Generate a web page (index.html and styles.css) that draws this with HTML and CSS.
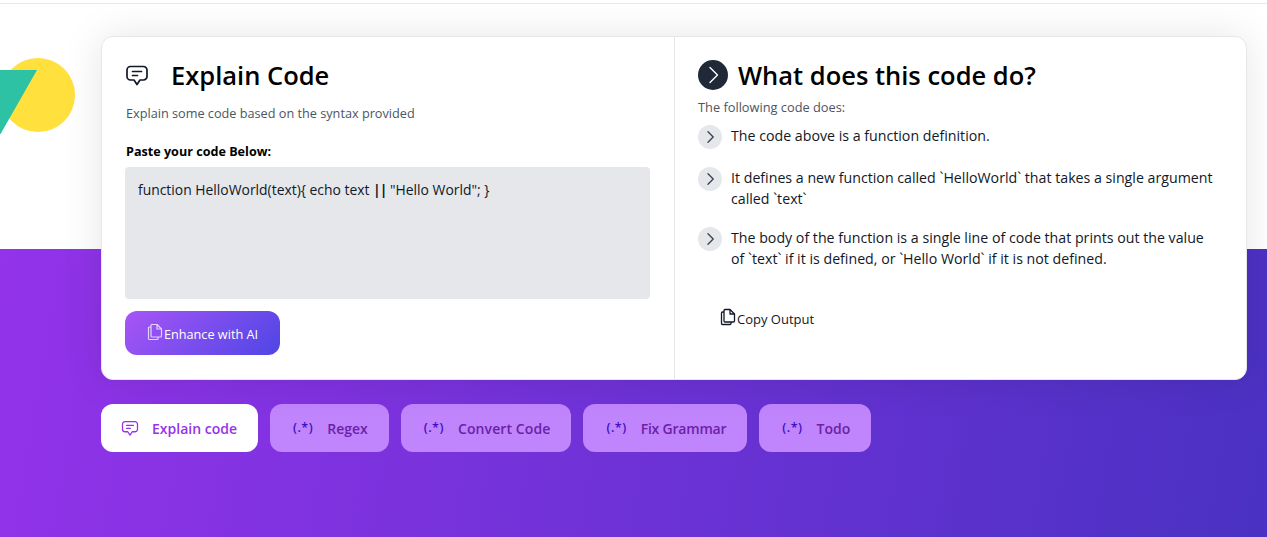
FILE: index.html
```html
<!DOCTYPE html>
<html lang="en">
<head>
<meta charset="utf-8">
<title>Explain Code</title>
<link rel="stylesheet" href="styles.css">
</head>
<body>
<div class="topbar"></div>
<main class="stage">
  <svg class="decor" width="76" height="76" viewBox="0 0 76 76" aria-hidden="true">
    <circle cx="38" cy="37" r="37" fill="#ffe03d"/>
    <polygon points="37,12 -4,12 -4,84" fill="#2dc2a4"/>
  </svg>
  <section class="card">
    <div class="pane pane-left">
      <div class="title-row">
        <svg class="title-icon" width="24" height="24" viewBox="0 0 24 24" fill="none" stroke="#111827" stroke-width="1.7" stroke-linecap="round" stroke-linejoin="round" aria-hidden="true"><path d="M5.500 3.500h13a3.500 3.500 0 0 1 3.500 3.500v6.500a3.500 3.500 0 0 1-3.500 3.500h-3.500L12 21.500 9 17H5.500A3.500 3.500 0 0 1 2 13.500V7a3.500 3.500 0 0 1 3.500-3.500z"/><path d="M7.500 8.500h9M7.500 12.500h5"/></svg>
        <h1 class="title">Explain Code</h1>
      </div>
      <p class="subtitle">Explain some code based on the syntax provided</p>
      <label class="field-label" for="code">Paste your code Below:</label>
      <div class="code-box" id="code">function HelloWorld(text){ echo text <b class="or">||</b> "Hello World"; }</div>
      <button class="enhance" type="button">
        <svg width="16" height="18" viewBox="0 0 16 18" fill="none" stroke="currentColor" stroke-width="1.200" stroke-linejoin="round" aria-hidden="true" class="copy-ico enhance-ico"><path d="M5 1.500h5l4.500 4.500v7a1 1 0 0 1-1 1H5a1 1 0 0 1-1-1v-10.500a1 1 0 0 1 1-1z"/><path d="M10 1.500V6h4.500"/><path d="M4 4H2.500a1 1 0 0 0-1 1v10.500a1 1 0 0 0 1 1H10a1 1 0 0 0 1-1V14"/></svg><span class="btn-text">Enhance with AI</span>
      </button>
    </div>
    <div class="pane pane-right">
      <div class="answer-head">
        <span class="bullet-lg"><svg width="18" height="18" viewBox="0 0 18 18" fill="none" stroke="#fff" stroke-width="1.400" stroke-linecap="round" stroke-linejoin="round" aria-hidden="true"><path d="M6 1.500 13.500 9 6 16.500"/></svg></span>
        <h2 class="title">What does this code do?</h2>
      </div>
      <p class="lead">The following code does:</p>
      <ul class="steps">
        <li class="step"><span class="bullet"><svg width="12" height="12" viewBox="0 0 12 12" fill="none" stroke="#374151" stroke-width="1.300" stroke-linecap="round" stroke-linejoin="round" aria-hidden="true"><path d="M4 .8 9.200 6 4 11.200"/></svg></span><span>The code above is a function definition.</span></li>
        <li class="step"><span class="bullet"><svg width="12" height="12" viewBox="0 0 12 12" fill="none" stroke="#374151" stroke-width="1.300" stroke-linecap="round" stroke-linejoin="round" aria-hidden="true"><path d="M4 .8 9.200 6 4 11.200"/></svg></span><span>It defines a new function called `HelloWorld` that takes a single argument called `text`</span></li>
        <li class="step"><span class="bullet"><svg width="12" height="12" viewBox="0 0 12 12" fill="none" stroke="#374151" stroke-width="1.300" stroke-linecap="round" stroke-linejoin="round" aria-hidden="true"><path d="M4 .8 9.200 6 4 11.200"/></svg></span><span>The body of the function is a single line of code that prints out the value of `text` if it is defined, or `Hello World` if it is not defined.</span></li>
      </ul>
      <button class="copy" type="button">
        <svg width="16" height="18" viewBox="0 0 16 18" fill="none" stroke="currentColor" stroke-width="1.300" stroke-linejoin="round" aria-hidden="true" class="copy-ico"><path d="M5 1.500h5l4.500 4.500v7a1 1 0 0 1-1 1H5a1 1 0 0 1-1-1v-10.500a1 1 0 0 1 1-1z"/><path d="M10 1.500V6h4.500"/><path d="M4 4H2.500a1 1 0 0 0-1 1v10.500a1 1 0 0 0 1 1H10a1 1 0 0 0 1-1V14"/></svg><span class="btn-text">Copy Output</span>
      </button>
    </div>
  </section>
  <nav class="tabs">
    <a class="tab tab-active"><svg class="tab-icon" width="18" height="18" viewBox="0 0 24 24" fill="none" stroke="currentColor" stroke-width="1.700" stroke-linecap="round" stroke-linejoin="round" aria-hidden="true"><path d="M5.500 3.500h13a3.500 3.500 0 0 1 3.500 3.500v6.500a3.500 3.500 0 0 1-3.500 3.500h-3.500L12 21.500 9 17H5.500A3.500 3.500 0 0 1 2 13.500V7a3.500 3.500 0 0 1 3.500-3.500z"/><path d="M7.500 8.500h9M7.500 12.500h5"/></svg>Explain code</a>
    <a class="tab"><span class="regex">(.*)</span>Regex</a>
    <a class="tab tab-loose"><span class="regex">(.*)</span>Convert Code</a>
    <a class="tab tab-tight"><span class="regex">(.*)</span>Fix Grammar</a>
    <a class="tab"><span class="regex">(.*)</span>Todo</a>
  </nav>
</main>
</body>
</html>
```
FILE: styles.css
```css
* { box-sizing: border-box; }
html, body { margin: 0; height: 100%; overflow: hidden; }
body { font-family: "Open Sans", "Noto Sans", "Liberation Sans", sans-serif; background: #fff; color: #000; }
.topbar { height: 4px; background: #fff; border-bottom: 1px solid #e5e7eb; }
.stage {
  position: relative;
  height: 533px;
  padding: 32px 20px 0 101px;
  background:
    linear-gradient(100deg, #9333ea 0%, #4a31c3 100%) left bottom / 100% 288px no-repeat,
    #fff;
  overflow: hidden;
}
.decor { position: absolute; left: 0; top: 54px; }
.card {
  position: relative;
  display: grid;
  grid-template-columns: 573px 1fr;
  height: 344px;
  background: #fff;
  border: 1px solid #e5e7eb;
  border-radius: 12px;
  box-shadow: 0 0 40px rgba(0, 0, 0, .1);
}
.pane-left { padding: 22px 24px 0 23px; border-right: 1px solid #e5e7eb; display: flex; flex-direction: column; align-items: flex-start; }
.title-row { display: flex; align-items: center; gap: 22px; height: 32px; }
.title { margin: 0; font-size: 25.500px; line-height: 32px; font-weight: 600; }
.subtitle { margin: 13px 0 0 1px; font-size: 12.700px; line-height: 18px; color: #4b5563; }
.field-label { margin: 21px 0 0 1px; font-size: 12.600px; line-height: 18px; font-weight: 700; }
.code-box {
  margin-top: 6px; width: 525px; height: 132px; padding: 12px 13px;
  background: #e5e7eb; border-radius: 4px;
  font-size: 13.900px; line-height: 21px; color: #111827;
}
.or { letter-spacing: -1px; }
.enhance {
  margin-top: 12px; width: 155px; height: 44px; padding: 1px 0 0;
  display: flex; align-items: center; justify-content: center;
  border: 0; border-radius: 12px; color: #fff;
  background: linear-gradient(135deg, #a855f7, #4f46e5);
  font: 500 12.700px/18px "Open Sans", sans-serif;
}
.copy-ico { margin-bottom: 4px; flex: none; }
.enhance-ico { opacity: .75; }
.btn-text { margin-left: 1px; }
.pane-right { padding: 23px 30px 0 23px; }
.answer-head { display: flex; align-items: center; gap: 10px; height: 30px; }
.bullet-lg { width: 30px; height: 30px; border-radius: 50%; background: #1f2937; display: flex; align-items: center; justify-content: center; flex: none; }
.lead { margin: 8px 0 0; font-size: 12.800px; line-height: 18px; color: #4b5563; }
.steps { list-style: none; margin: 9px 0 0; padding: 0; }
.step { display: flex; gap: 9px; font-size: 14.200px; line-height: 21px; color: #111827; margin-bottom: 18px; }
.bullet { width: 24px; height: 24px; border-radius: 50%; background: #e5e7eb; display: flex; align-items: center; justify-content: center; flex: none; }
.copy {
  margin: 39px 0 0 22px; padding: 0; border: 0; background: none;
  display: flex; align-items: center; color: #111827;
  font: 400 13px/18px "Open Sans", sans-serif;
}
.tabs { display: flex; gap: 12px; margin-top: 24px; }
.tab {
  display: flex; align-items: center; gap: 14px; height: 48px; padding: 0 21px 0 23px;
  border-radius: 12px; background: #c084fc; color: #6b21a8;
  font-size: 14px; font-weight: 600;
}
.tab-loose { letter-spacing: .1px; }
.tab-tight { letter-spacing: -.2px; }
.tab-active { background: #fff; color: #9333ea; padding-left: 20px; gap: 13px; }
.tab-icon { flex: none; }
.regex { color: #3e0fc4; font-size: 12.500px; font-weight: 600; letter-spacing: .5px; margin-top: -2px; }
```
